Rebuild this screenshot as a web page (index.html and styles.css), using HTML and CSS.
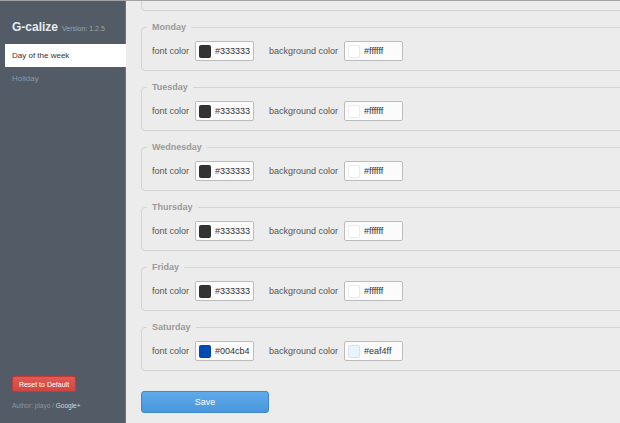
FILE: index.html
```html
<!DOCTYPE html>
<html>
<head>
<meta charset="utf-8">
<link rel="stylesheet" href="styles.css">
</head>
<body>
<div class="app">
  <aside class="sidebar">
    <div class="brand"><span class="title">G-calize</span><span class="version">Version: 1.2.5</span></div>
    <nav class="nav">
      <div class="nav-item active">Day of the week</div>
      <div class="nav-item">Holiday</div>
    </nav>
    <div class="side-bottom">
      <button class="reset">Reset to Default</button>
      <div class="author">Author: piayo / <span class="gplus">Google+</span></div>
    </div>
  </aside>
  <main class="main">
    <div class="content">
      <div class="prev-card"></div>
      <fieldset class="day">
        <legend>Monday</legend>
        <div class="row">
          <span class="label">font color</span>
          <span class="color-input"><span class="swatch" style="background:#333333"></span>#333333</span>
          <span class="label">background color</span>
          <span class="color-input"><span class="swatch" style="background:#ffffff"></span>#ffffff</span>
        </div>
      </fieldset>
      <fieldset class="day">
        <legend>Tuesday</legend>
        <div class="row">
          <span class="label">font color</span>
          <span class="color-input"><span class="swatch" style="background:#333333"></span>#333333</span>
          <span class="label">background color</span>
          <span class="color-input"><span class="swatch" style="background:#ffffff"></span>#ffffff</span>
        </div>
      </fieldset>
      <fieldset class="day">
        <legend>Wednesday</legend>
        <div class="row">
          <span class="label">font color</span>
          <span class="color-input"><span class="swatch" style="background:#333333"></span>#333333</span>
          <span class="label">background color</span>
          <span class="color-input"><span class="swatch" style="background:#ffffff"></span>#ffffff</span>
        </div>
      </fieldset>
      <fieldset class="day">
        <legend>Thursday</legend>
        <div class="row">
          <span class="label">font color</span>
          <span class="color-input"><span class="swatch" style="background:#333333"></span>#333333</span>
          <span class="label">background color</span>
          <span class="color-input"><span class="swatch" style="background:#ffffff"></span>#ffffff</span>
        </div>
      </fieldset>
      <fieldset class="day">
        <legend>Friday</legend>
        <div class="row">
          <span class="label">font color</span>
          <span class="color-input"><span class="swatch" style="background:#333333"></span>#333333</span>
          <span class="label">background color</span>
          <span class="color-input"><span class="swatch" style="background:#ffffff"></span>#ffffff</span>
        </div>
      </fieldset>
      <fieldset class="day">
        <legend>Saturday</legend>
        <div class="row">
          <span class="label">font color</span>
          <span class="color-input"><span class="swatch" style="background:#004cb4"></span>#004cb4</span>
          <span class="label">background color</span>
          <span class="color-input"><span class="swatch" style="background:#eaf4ff"></span>#eaf4ff</span>
        </div>
      </fieldset>
      <button class="save">Save</button>
    </div>
  </main>
</div>
</body>
</html>
```

FILE: styles.css
```css
html, body {
  margin: 0;
  padding: 0;
}
body {
  width: 620px;
  height: 423px;
  overflow: hidden;
  font-family: "Liberation Sans", Arial, sans-serif;
  border-top: 1px solid #a3a3a3;
  box-sizing: border-box;
  background: #ececec;
}
.app {
  display: flex;
  height: 422px;
}
.sidebar {
  width: 125px;
  flex: none;
  background: #535c66;
  border-right: 1px solid #6b737c;
  display: flex;
  flex-direction: column;
}
.brand {
  padding: 18px 0 0 12px;
  line-height: 14px;
  height: 14px;
  white-space: nowrap;
}
.title {
  font-size: 12px;
  font-weight: bold;
  color: #e4eaf0;
}
.version {
  font-size: 7px;
  color: #9aa3ad;
  margin-left: 4px;
}
.nav {
  margin-top: 11px;
}
.nav-item {
  margin-left: 5px;
  height: 23px;
  line-height: 23px;
  padding-left: 7px;
  font-size: 8px;
  color: #8c96a0;
}
.nav-item.active {
  background: #ffffff;
  color: #333333;
  margin-right: -1px;
}
.side-bottom {
  margin-top: auto;
  padding: 0 0 12px 12px;
}
.reset {
  display: block;
  width: 64px;
  height: 16px;
  padding: 0;
  border: 1px solid #c23b36;
  border-radius: 2px;
  background: linear-gradient(#e05a55, #d2443f);
  color: #ffffff;
  font-family: "Liberation Sans", Arial, sans-serif;
  font-size: 7px;
  margin-bottom: 9px;
}
.author {
  font-size: 6.5px;
  line-height: 10px;
  color: #8c959f;
  white-space: nowrap;
}
.gplus {
  color: #d3d8de;
}
.main {
  flex: 1;
  overflow: hidden;
}
.content {
  padding-left: 15px;
  margin-right: -40px;
}
.prev-card {
  margin-top: -40px;
  height: 48px;
  border: 1px solid #d4d4d4;
  border-radius: 4px;
  margin-bottom: 10px;
}
.day {
  margin: 0 0 10px 0;
  padding: 8px 5px 9px;
  border: 1px solid #d4d4d4;
  border-radius: 4px;
  min-inline-size: 0;
}
.day legend {
  padding: 0 5px;
  font-size: 9px;
  font-weight: bold;
  line-height: 12px;
  color: #9a9a9a;
}
.row {
  display: flex;
  align-items: center;
  height: 20px;
  padding-left: 5px;
  font-size: 9px;
}
.label {
  color: #555555;
  margin-right: 6px;
  white-space: nowrap;
}
.color-input {
  display: flex;
  align-items: center;
  box-sizing: border-box;
  width: 59px;
  height: 20px;
  padding-left: 3px;
  border: 1px solid #bcbcbc;
  border-radius: 2px;
  background: #fbfbfb;
  color: #333333;
  margin-right: 15px;
}
.swatch {
  width: 12px;
  height: 13px;
  border-radius: 2px;
  box-sizing: border-box;
  border: 1px solid rgba(0, 0, 0, 0.08);
  margin-right: 4px;
  flex: none;
}
.save {
  display: block;
  margin-top: 20px;
  width: 128px;
  height: 22px;
  padding: 0;
  border: 1px solid #3e88cf;
  border-radius: 3px;
  background: linear-gradient(#5eaaea, #4a96dd);
  color: #ffffff;
  font-family: "Liberation Sans", Arial, sans-serif;
  font-size: 9px;
}
```
